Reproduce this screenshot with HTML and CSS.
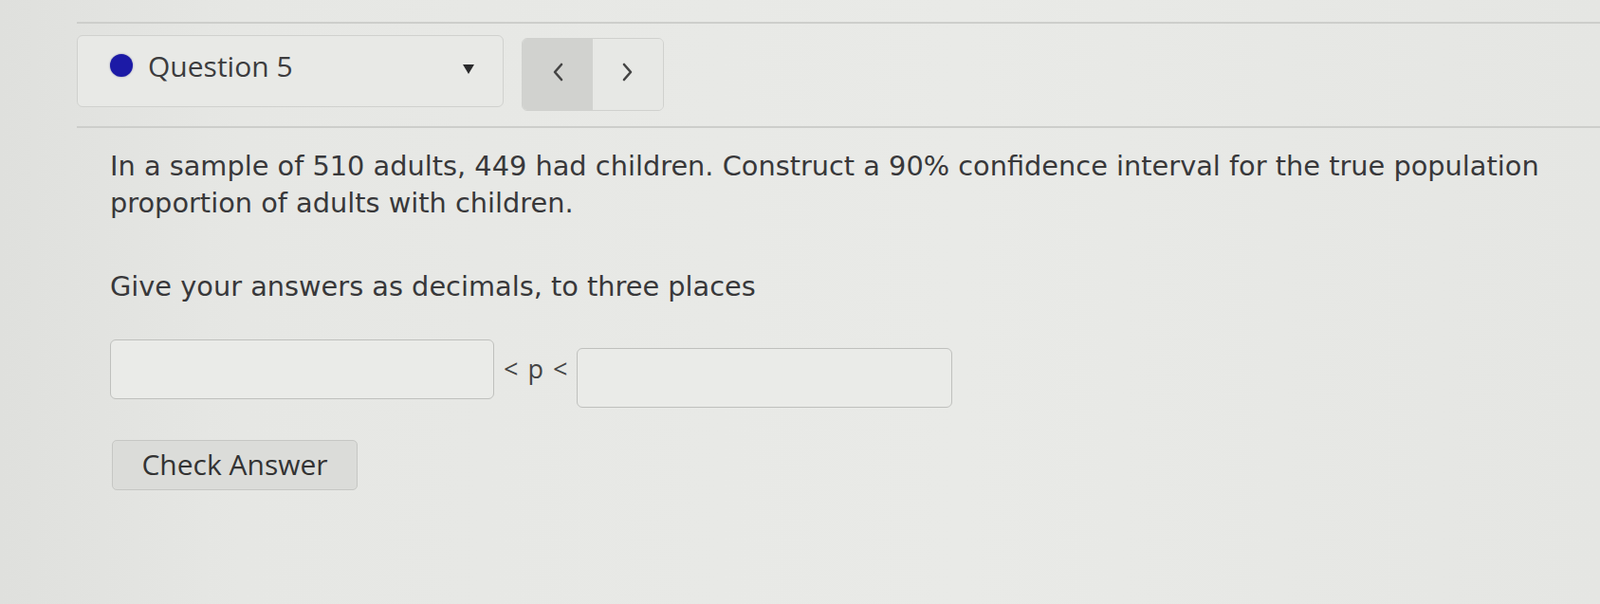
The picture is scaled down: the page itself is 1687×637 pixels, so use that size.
FILE: index.html
```html
<!DOCTYPE html>
<html lang="en">
<head>
<meta charset="utf-8">
<title>Question 5</title>
<link rel="stylesheet" href="styles.css">
</head>
<body>
<div class="page">
  <div class="qbar">
    <div class="qselect">
      <span class="dot"></span>
      <span class="qlabel">Question 5</span>
      <span class="caret"></span>
    </div>
    <div class="nav">
      <button class="navbtn prev" type="button" aria-label="Previous">
        <svg width="14" height="22" viewBox="0 0 14 22"><path d="M11 3 L4 11 L11 19" fill="none" stroke="#444" stroke-width="2.6" stroke-linecap="round" stroke-linejoin="round"/></svg>
      </button>
      <button class="navbtn next" type="button" aria-label="Next">
        <svg width="14" height="22" viewBox="0 0 14 22"><path d="M3 3 L10 11 L3 19" fill="none" stroke="#444" stroke-width="2.6" stroke-linecap="round" stroke-linejoin="round"/></svg>
      </button>
    </div>
  </div>
  <div class="question">
    <p class="text">In a sample of 510 adults, 449 had children. Construct a 90% confidence interval for the true population proportion of adults with children.</p>
    <p class="text instr">Give your answers as decimals, to three places</p>
    <div class="answer">
      <input class="ans" type="text" aria-label="lower bound">
      <span class="rel">&lt; p &lt;</span>
      <input class="ans" type="text" aria-label="upper bound">
    </div>
    <button class="check" type="button">Check Answer</button>
  </div>
</div>
</body>
</html>
```
FILE: styles.css
```css
html, body {
  margin: 0;
  padding: 0;
}
body {
  background: linear-gradient(90deg, #dfe0dd 0%, #e6e7e4 15%, #e9eae7 60%, #e5e6e3 100%);
  width: 1687px;
  height: 637px;
  overflow: hidden;
  font-family: "DejaVu Sans", Verdana, sans-serif;
  color: #38383a;
}
.page {
  padding-top: 23px;
}
.qbar {
  margin-left: 81px;
  border-top: 2px solid #cdcecb;
  border-bottom: 2px solid #cdcecb;
  padding: 12px 0 16px 0;
  display: flex;
  align-items: flex-start;
  gap: 19px;
}
.qselect {
  width: 450px;
  height: 76px;
  box-sizing: border-box;
  border: 1.5px solid #d0d1ce;
  border-radius: 6px;
  background: #e8e9e6;
  display: flex;
  align-items: center;
  padding-left: 34px;
  padding-right: 30px;
  padding-bottom: 12px;
}
.dot {
  width: 24px;
  height: 24px;
  border-radius: 50%;
  background: #1c1aa6;
  box-shadow: 0 0 2px rgba(20, 20, 120, 0.5);
  flex: none;
}
.qlabel {
  font-family: "Open Sans", sans-serif;
  font-size: 30px;
  color: #3c3c3e;
  margin-left: 16px;
  flex: 1;
}
.caret {
  width: 0;
  height: 0;
  border-left: 6px solid transparent;
  border-right: 6px solid transparent;
  border-top: 10px solid #2a2a2c;
  margin-top: 8px;
}
.nav {
  display: flex;
  height: 75px;
  border: 1.5px solid #d0d1ce;
  border-radius: 6px;
  overflow: hidden;
  margin-top: 3px;
}
.navbtn {
  width: 74px;
  border: none;
  margin: 0;
  padding: 0 0 6px 0;
  display: flex;
  align-items: center;
  justify-content: center;
}
.prev {
  background: #d1d2cf;
}
.next {
  background: #e7e8e5;
}
.question {
  margin-left: 116px;
  padding-top: 21px;
}
.text {
  margin: 0;
  font-size: 28.8px;
  line-height: 39px;
  width: 1530px;
}
.instr {
  margin-top: 49px;
}
.answer {
  margin-top: 36px;
  display: flex;
  align-items: flex-start;
  gap: 10px;
}
.ans {
  width: 405px;
  height: 63px;
  box-sizing: border-box;
  border: 1.5px solid #bfc0bd;
  border-radius: 6px;
  background: #eaebe8;
  margin: 0;
}
.ans + .rel + .ans {
  width: 396px;
  margin-top: 9px;
}
.rel {
  font-family: "Open Sans", sans-serif;
  font-size: 27px;
  color: #444;
  margin-top: 12px;
  word-spacing: 3px;
}
.check {
  margin-top: 34px;
  margin-left: 2px;
  width: 259px;
  height: 53px;
  border: 1.5px solid #c6c7c4;
  border-radius: 5px;
  background: #dbdcd9;
  font-family: "Open Sans", sans-serif;
  font-size: 30px;
  color: #333;
  padding: 0 0 3px 0;
}
```
